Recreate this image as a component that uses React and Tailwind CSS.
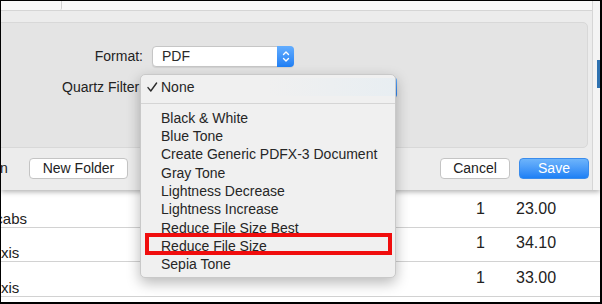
import React from 'react';

const filters = [
    'Black & White',
    'Blue Tone',
    'Create Generic PDFX-3 Document',
    'Gray Tone',
    'Lightness Decrease',
    'Lightness Increase',
    'Reduce File Size Best',
    'Reduce File Size',
    'Sepia Tone',
];

const rows = [
    { name: 'cabs', qty: '1', price: '23.00', h: 'h-[38px]', cut: true },
    { name: 'xis', qty: '1', price: '34.10', h: 'h-[34px]' },
    { name: 'xis', qty: '1', price: '33.00', h: 'h-[35px]' },
];

function Stepper() {
    return (
        <div className="w-[17px] self-stretch -my-px -mr-px rounded-r-[4px] bg-gradient-to-b from-[#62adff] to-[#1f7ff4] flex items-center justify-center">
            <svg width="8" height="13" viewBox="0 0 8 13" fill="none" stroke="white" strokeWidth="1.4" strokeLinecap="round" strokeLinejoin="round">
                <path d="M1.5 4.5 L4 2 L6.5 4.5" />
                <path d="M1.5 8.5 L4 11 L6.5 8.5" />
            </svg>
        </div>
    );
}

function PopUp({ label, value, width }) {
    return (
        <div className="flex items-center gap-[9px]">
            <div className="w-[149px] text-right text-[14px] text-[#222] whitespace-nowrap">{label}</div>
            <div className={`${width} h-[21px] flex items-center bg-white border border-[#c6c6c6] rounded-[4px] shadow-[0_1px_1px_rgba(0,0,0,0.08)]`}>
                <span className="flex-1 pl-[9px] text-[14px] text-[#2a2a2a]">{value}</span>
                <Stepper />
            </div>
        </div>
    );
}

function Button({ children, className }) {
    return (
        <div className={`h-[21px] flex items-center justify-center rounded-[4px] text-[14px] ${className}`}>
            {children}
        </div>
    );
}

export default function App() {
    return (
        <div className="w-[602px] h-[304px] relative overflow-hidden bg-white border-black border-t border-l border-r-2 border-b-2 font-['Liberation_Sans',Arial,sans-serif] text-[#222]">
            {/* sheet */}
            <div className="relative z-10 flex h-[189px] shadow-[0_2px_5px_rgba(0,0,0,0.3)]">
                <div className="w-[591px] flex flex-col bg-[#ececec]">
                    <div className="h-[10px] flex bg-[#f8f8f8] border-b border-[#d5d5d5]">
                        <div className="w-[61px] border-r border-[#d0d0d0] rounded-br-[2px]" />
                    </div>
                    <div className="flex-1 pt-[11px]">
                        <div className="h-[126px] -ml-[8px] mr-[4px] rounded-[5px] border border-[#d8d8d8] bg-[#e4e4e4] pt-[23px] flex flex-col gap-[10px]">
                            <PopUp label="Format:" value="PDF" width="w-[142px]" />
                            <PopUp label="Quartz Filter:" value="None" width="w-[245px]" />
                        </div>
                        <div className="mt-[10px] flex items-center pr-[3px]">
                            <span className="text-[14px] -ml-[1px] w-[29px]">n</span>
                            <Button className="w-[99px] bg-white border border-[#c4c4c4]">New Folder</Button>
                            <div className="flex-1" />
                            <Button className="w-[70px] bg-white border border-[#c4c4c4]">Cancel</Button>
                            <Button className="w-[70px] ml-[9px] text-white border border-[#3a8cec] bg-gradient-to-b from-[#6db4fb] to-[#1c80f5]">Save</Button>
                        </div>
                    </div>
                </div>
                <div className="flex-1 bg-[#f4f4f4] border-l border-[#d6d6d6] flex flex-col items-end">
                    <div className="mt-[59px] h-[28px] w-[3px] bg-[#2f72b0]" />
                </div>
            </div>

            {/* table behind */}
            <div className="flex flex-col">
                {rows.map((r, i) => (
                    <div key={i} className={`${r.h} flex border-b border-[#d2d2d2]`}>
                        <div className={`w-[26px] flex items-end whitespace-nowrap text-[15px] leading-none pb-[1px] ${r.cut ? 'justify-end' : 'justify-start'}`}>{r.name}</div>
                        <div className="w-[449px]" />
                        <div className="w-[40px] flex items-end text-[16px] leading-none pb-[10px]">{r.qty}</div>
                        <div className="flex items-end text-[16px] leading-none pb-[10px]">{r.price}</div>
                    </div>
                ))}
            </div>

            {/* Quartz Filter menu */}
            <div className="absolute z-20 left-[139px] top-[73px] w-[256px] h-[204px] rounded-[5px] bg-[#f0f0f0] border border-[#c9c9c9] shadow-[0_5px_14px_rgba(0,0,0,0.28)] pt-[3px] text-[14px] text-[#262626]">
                <div className="h-[18px] flex items-center pl-[6px] bg-gradient-to-r from-[#f0f0f0] via-[#f0f0f0] to-[#e8eef2]">
                    <svg width="14" height="10" viewBox="0 0 14 10" fill="none" stroke="#2b2b2b" strokeWidth="1.4" strokeLinecap="round" strokeLinejoin="round">
                        <path d="M1 5.6 L3.8 9 L9.6 1" />
                    </svg>
                    <span>None</span>
                </div>
                <div className="mt-[7px] mb-[5px] h-px bg-[#d5d5d5]" />
                {filters.map((f) => (
                    <div key={f} className="h-[18.33px] flex items-center pl-[20px] whitespace-nowrap">{f}</div>
                ))}
                <div className="absolute left-[4px] top-[158px] w-[247px] h-[22px] border-4 border-[#f00d0d]" />
            </div>
        </div>
    );
}
